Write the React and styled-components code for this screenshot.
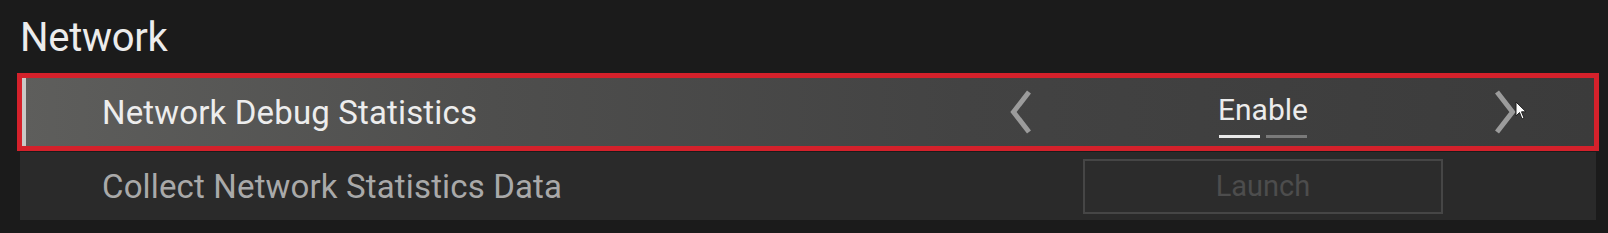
import React, { useState } from 'react';
import styled, { createGlobalStyle } from 'styled-components';

const GlobalStyle = createGlobalStyle`
  html, body {
    margin: 0;
    padding: 0;
    background: #1b1b1b;
    font-family: Roboto, "Liberation Sans", sans-serif;
  }
`;

const Page = styled.div`
  width: 1608px;
  height: 233px;
  background: #1b1b1b;
  overflow: hidden;
`;

const Title = styled.h1`
  margin: 0;
  padding: 18px 0 0 20px;
  font-size: 40px;
  line-height: 1;
  font-weight: 400;
  letter-spacing: -0.3px;
  color: #ececec;
`;

const Panel = styled.div`
  margin: 15px 0 0 17px;
  width: 1582px;
  display: flex;
  flex-direction: column;
  gap: 1px;
`;

const Row = styled.div`
  box-sizing: border-box;
  display: grid;
  grid-template-columns: 1fr 546px;
  align-items: center;
  height: ${p => (p.$active ? '78px' : '68px')};
  padding: 0 58px 0 80px;
  border-style: solid;
  border-color: ${p => (p.$active ? '#d4212b' : 'transparent')};
  border-width: ${p => (p.$active ? '5px' : '0 2px')};
  margin: ${p => (p.$active ? '0' : '0 3px')};
  background: ${p =>
    p.$active
      ? 'linear-gradient(90deg, #5e5e5c 0%, #4e4e4d 30%, #434343 60%, #3b3b3b 100%)'
      : '#2a2a2a'};
  box-shadow: ${p => (p.$active ? 'inset 4px 0 0 #c9c9c7' : 'none')};
`;

const Label = styled.span`
  font-size: 33px;
  font-weight: 400;
  letter-spacing: 0.15px;
  color: ${p => (p.$active ? '#ededed' : '#a9a9a9')};
  white-space: nowrap;
`;

const Selector = styled.div`
  display: flex;
  align-items: center;
  justify-content: space-between;
  padding: 0 20px;
`;

const Arrow = styled.button`
  position: relative;
  display: flex;
  padding: 0;
  border: none;
  background: none;
  cursor: pointer;
`;

const Value = styled.div`
  display: flex;
  flex-direction: column;
  align-items: center;
  gap: 10px;
  margin-top: 8px;
`;

const ValueText = styled.span`
  font-size: 30px;
  line-height: 1;
  color: #ececec;
`;

const Dots = styled.div`
  display: flex;
  gap: 6px;
`;

const Dot = styled.span`
  width: 41px;
  height: 3px;
  background: ${p => (p.$on ? '#e9e9e9' : '#7a7a7a')};
`;

const Cursor = styled.svg`
  position: absolute;
  left: 21px;
  top: 11px;
`;

const ActionCell = styled.div`
  display: flex;
  justify-content: center;
`;

const LaunchButton = styled.button`
  box-sizing: border-box;
  width: 360px;
  height: 55px;
  border: 2px solid #464646;
  background: #2c2c2c;
  color: #4d4d4d;
  font-family: Roboto, "Liberation Sans", sans-serif;
  font-size: 29px;
  padding: 0;
  cursor: default;
`;

const Chevron = ({ dir }) => (
  <svg width="22" height="44" viewBox="0 0 22 44">
    <polyline
      points={dir === 'left' ? '19,2 3.5,22 19,42' : '3,2 18.5,22 3,42'}
      fill="none"
      stroke="#9b9b9b"
      strokeWidth="5"
    />
  </svg>
);

const options = ['Enable', 'Disable'];

const App = () => {
  const [index, setIndex] = useState(0);
  const step = d => setIndex(i => (i + d + options.length) % options.length);

  return (
    <Page>
      <GlobalStyle />
      <Title>Network</Title>
      <Panel>
        <Row $active>
          <Label $active>Network Debug Statistics</Label>
          <Selector>
            <Arrow onClick={() => step(-1)}>
              <Chevron dir="left" />
            </Arrow>
            <Value>
              <ValueText>{options[index]}</ValueText>
              <Dots>
                {options.map((o, i) => (
                  <Dot key={o} $on={i === index} />
                ))}
              </Dots>
            </Value>
            <Arrow onClick={() => step(1)}>
              <Chevron dir="right" />
              <Cursor width="12" height="20" viewBox="0 0 12 20">
                <path d="M1 1 L1 15 L4.5 11.5 L7 18 L9 17 L6.5 10.8 L11 10.8 Z" fill="#fff" stroke="#222" strokeWidth="1" />
              </Cursor>
            </Arrow>
          </Selector>
        </Row>
        <Row>
          <Label>Collect Network Statistics Data</Label>
          <ActionCell>
            <LaunchButton>Launch</LaunchButton>
          </ActionCell>
        </Row>
      </Panel>
    </Page>
  );
};

export default App;
